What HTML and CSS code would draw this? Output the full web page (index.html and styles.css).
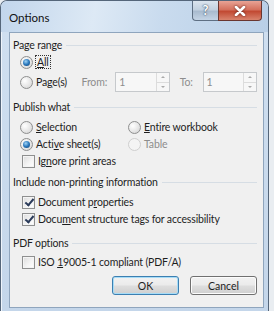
FILE: index.html
```html
<!DOCTYPE html>
<html lang="en">
<head>
<meta charset="UTF-8">
<meta name="viewport" content="width=device-width, initial-scale=1.0">
<title>Options</title>
<link rel="stylesheet" href="styles.css">
</head>
<body>

<div class="window">
  <div class="titlebar">
    <span class="title">Options</span>
    <div class="caption-buttons">
      <span class="btn-help">?</span>
      <span class="btn-close">
        <svg width="12" height="10" viewBox="0 0 12 10">
          <path d="M2 1 L10 9 M10 1 L2 9" stroke="#fff" stroke-width="2.6" stroke-linecap="round"/>
        </svg>
      </span>
    </div>
  </div>

  <div class="client">
    <div class="group-head first"><span>Page range</span></div>
    <div class="row radio-row">
      <span class="radio checked"></span><span class="label focus"><u>A</u>ll</span>
    </div>
    <div class="row radio-row pages-row">
      <span class="radio"></span><span class="label pages-label">Pa<u>g</u>e(s)</span>
      <span class="dim from">From:</span>
      <span class="spin"><span class="val">1</span><span class="arrows"><i class="up"></i><i class="down"></i></span></span>
      <span class="dim to">To:</span>
      <span class="spin"><span class="val">1</span><span class="arrows"><i class="up"></i><i class="down"></i></span></span>
    </div>

    <div class="group-head"><span>Publish what</span></div>
    <div class="two-col sel-row">
      <div class="row radio-row"><span class="radio"></span><span class="label"><u>S</u>election</span></div>
      <div class="row radio-row"><span class="radio"></span><span class="label"><u>E</u>ntire workbook</span></div>
    </div>
    <div class="two-col">
      <div class="row radio-row"><span class="radio checked"></span><span class="label">Acti<u>v</u>e sheet(s)</span></div>
      <div class="row radio-row"><span class="radio disabled"></span><span class="label dim">Table</span></div>
    </div>
    <div class="row check-row">
      <span class="check"></span><span class="label">Ig<u>n</u>ore print areas</span>
    </div>

    <div class="group-head include-head"><span>Include non-printing information</span></div>
    <div class="row check-row props-row">
      <span class="check checked"></span><span class="label">Document p<u>r</u>operties</span>
    </div>
    <div class="row check-row">
      <span class="check checked"></span><span class="label">Docu<u>m</u>ent structure tags for accessibility</span>
    </div>

    <div class="group-head pdf-head"><span>PDF options</span></div>
    <div class="row check-row iso-row">
      <span class="check"></span><span class="label">ISO <u>1</u>9005-1 compliant (PDF/A)</span>
    </div>

    <div class="buttons">
      <button class="default">OK</button>
      <button>Cancel</button>
    </div>
  </div>
</div>

</body>
</html>
```

FILE: styles.css
```css
/* Options dialog, Windows 7 look */
body {
  margin: 0;
  background-color: #e9edf1;
  font-family: Lato, "Liberation Sans", sans-serif;
  font-size: 10.5px;
  letter-spacing: -0.15px;
  color: #1e1e1e;
}

.window {
  box-sizing: border-box;
  width: 269px;
  height: 311px;
  padding: 0 4px 0 8px;
  border: 1px solid #55667a;
  border-bottom: none;
  border-radius: 7px 7px 0 0;
  background: linear-gradient(180deg, #c7d9ed 0%, #cfdff0 10%, #c4d6ea 100%);
  box-shadow: inset 1px 1px 0 #eef4fb;
}

.titlebar {
  height: 31px;
  display: flex;
  justify-content: space-between;
  background: linear-gradient(100deg, #c2d6ec 0%, #dde9f5 35%, #c9dbee 60%, #b9cfe7 100%);
  margin: 0 -4px 0 -8px;
  padding: 0 6px 0 8px;
  border-radius: 6px 6px 0 0;
}

.title {
  font-size: 11.5px;
  letter-spacing: 0;
  line-height: 33px;
  color: #111;
}

.caption-buttons {
  display: flex;
  height: 20px;
}

.btn-help {
  width: 25px;
  height: 19px;
  border: 1px solid #5e6f83;
  border-top: none;
  border-right: none;
  border-radius: 0 0 0 4px;
  background: linear-gradient(180deg, #dbe4ee 0%, #c3d1e0 45%, #a9bbcf 55%, #c4d4e5 100%);
  color: #fff;
  font-weight: bold;
  font-size: 13px;
  line-height: 19px;
  text-align: center;
  text-shadow: 0 0 2px #3f5068, 0 0 1px #3f5068;
}

.btn-close {
  width: 42px;
  height: 19px;
  border: 1px solid #6a3630;
  border-top: none;
  border-radius: 0 0 4px 0;
  background: linear-gradient(180deg, #e8a395 0%, #d4715e 45%, #c24a33 55%, #d8836d 100%);
  display: flex;
  justify-content: center;
  align-items: center;
}

.btn-close svg {
  filter: drop-shadow(0 0 1px #5a1a10);
}

.client {
  height: 274px;
  background-color: #f0f0f0;
  border: 1px solid #8fa5bd;
  padding: 0 6px 0 2px;
}

.group-head {
  display: flex;
  align-items: center;
  height: 16px;
  margin-top: 7px;
}

.group-head.first {
  margin-top: 4px;
}

.group-head.include-head {
  margin-top: 5px;
}

.group-head.pdf-head {
  margin-top: 8px;
}

.group-head::after {
  content: "";
  flex: 1;
  margin-left: 4px;
  border-top: 1px solid #d6dde4;
}

.group-head span {
  padding-left: 1px;
}

.row {
  display: flex;
  align-items: center;
  height: 16px;
  margin-top: 1px;
}

.radio-row {
  padding-left: 8px;
}

.check-row {
  padding-left: 10px;
}

.radio {
  width: 11px;
  height: 11px;
  border: 1px solid #8e8f8f;
  border-radius: 50%;
  background: radial-gradient(circle at 35% 35%, #ffffff 0%, #e6e6e6 55%, #cfcfcf 100%);
  margin-right: 3px;
  position: relative;
  flex: none;
}

.radio.checked::after {
  content: "";
  position: absolute;
  left: 2px;
  top: 2px;
  width: 7px;
  height: 7px;
  border-radius: 50%;
  background: radial-gradient(circle at 40% 35%, #9fd3f5 0%, #2a78bd 50%, #153f6a 100%);
}

.radio.disabled {
  border-color: #cfcfcf;
  background: #f4f4f4;
}

.check {
  width: 11px;
  height: 11px;
  border: 1px solid #8e8f8f;
  background: linear-gradient(135deg, #dcdcdc 0%, #f5f5f5 60%, #ffffff 100%);
  box-shadow: inset 0 0 0 1px #f4f4f4;
  margin-right: 3px;
  position: relative;
  flex: none;
}

.check.checked::after {
  content: "";
  position: absolute;
  left: 4px;
  top: 0px;
  width: 3px;
  height: 7px;
  border-right: 2px solid #2b3b5a;
  border-bottom: 2px solid #2b3b5a;
  transform: rotate(40deg);
}

.label {
  white-space: nowrap;
}

.label.focus {
  outline: 1px dotted #333;
  outline-offset: 0;
  padding: 0 1px;
}

.dim {
  color: #8d8d8d;
}

.pages-row {
  height: 20px;
  margin-top: 2px;
}

.pages-label {
  width: 46px;
}

.from {
  width: 34px;
}

.to {
  width: 23px;
  margin-left: 10px;
}

.spin {
  width: 53px;
  height: 18px;
  border: 1px solid #c6c9cc;
  background-color: #f7f7f7;
  display: flex;
  justify-content: space-between;
}

.spin .val {
  color: #8d8d8d;
  padding-left: 3px;
  line-height: 18px;
}

.arrows {
  width: 12px;
  display: flex;
  flex-direction: column;
  border-left: 1px solid #dcdcdc;
}

.arrows i {
  flex: 1;
  position: relative;
}

.arrows i.up {
  border-bottom: 1px solid #dcdcdc;
}

.arrows i::after {
  content: "";
  position: absolute;
  left: 4px;
  top: 3px;
  border-left: 2px solid transparent;
  border-right: 2px solid transparent;
}

.arrows i.up::after {
  border-bottom: 2px solid #aaa;
}

.arrows i.down::after {
  border-top: 2px solid #aaa;
}

.two-col {
  display: grid;
  grid-template-columns: 108px auto;
}

.sel-row {
  margin-top: 3px;
}

.props-row {
  margin-top: 4px;
}

.iso-row {
  margin-top: 3px;
}

.buttons {
  display: flex;
  justify-content: flex-end;
  gap: 11px;
  margin-top: 6px;
}

.buttons button {
  width: 67px;
  height: 19px;
  border: 1px solid #707070;
  border-radius: 3px;
  background: linear-gradient(180deg, #f2f2f2 0%, #ebebeb 45%, #dddddd 55%, #cfcfcf 100%);
  box-shadow: inset 0 0 0 1px #fcfcfc;
  font-family: Lato, "Liberation Sans", sans-serif;
  font-size: 10.5px;
  color: #1e1e1e;
  padding: 0;
}

.buttons button.default {
  border-color: #3c7fb1;
  box-shadow: inset 0 0 0 1px #a6dcf7;
}
```
